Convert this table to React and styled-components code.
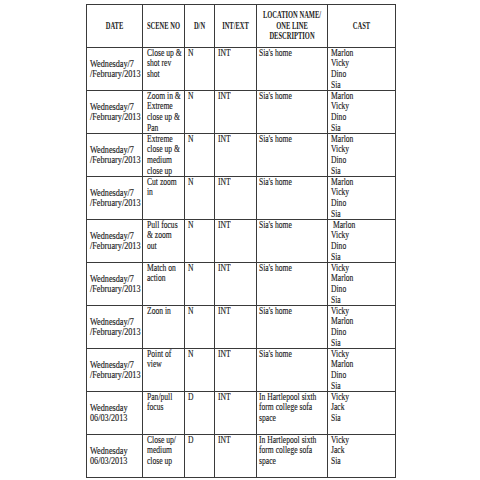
import React from 'react';
import styled, { createGlobalStyle } from 'styled-components';

const GlobalStyle = createGlobalStyle`
  html, body {
    margin: 0;
    padding: 0;
    background: #fff;
  }
`;

const Page = styled.div`
  width: 480px;
  height: 480px;
  padding: 4px 0 0 86px;
  box-sizing: border-box;
  font-family: 'Liberation Serif', 'Times New Roman', serif;
  color: #1c1c1c;
  overflow: hidden;
`;

const Table = styled.table`
  width: 309px;
  border-collapse: collapse;
  table-layout: fixed;
  border: 1.5px solid #3a3a3a;
`;

const HeadCell = styled.th`
  border: 1px solid #3a3a3a;
  height: 42px;
  padding: 0;
  vertical-align: middle;
  font-weight: bold;
  font-size: 10px;
  line-height: 10.6px;
`;

const Cell = styled.td`
  border: 1px solid #3a3a3a;
  height: 42px;
  padding: 0 0 0 ${(p) => p.$indent || 3}px;
  vertical-align: ${(p) => (p.$middle ? 'middle' : 'top')};
  font-size: 10px;
  line-height: 10.7px;
  -webkit-text-stroke: 0.15px #1c1c1c;
`;

// the source font is a narrow serif, so squeeze the lines sideways
const Lines = styled.div`
  display: flex;
  flex-direction: column;
  align-items: ${(p) => (p.$center ? 'center' : 'flex-start')};
  margin: ${(p) => (p.$center ? '0' : '-0.5px 0 -1px')};
  white-space: nowrap;
  transform: scaleX(${(p) => p.$squeeze || 0.76});
  transform-origin: ${(p) => (p.$center ? 'center top' : 'left top')};
`;

const columns = [56, 42, 30, 42, 71, 68];

const wed7 = ['Wednesday/7', '/February/2013'];
const wed6 = ['Wednesday', '06/03/2013'];
const mvds = ['Marlon', 'Vicky', 'Dino', 'Sia'];
const vmds = ['Vicky', 'Marlon', 'Dino', 'Sia'];
const vjs = ['Vicky', 'Jack', 'Sia'];
const home = ["Sia's home"];
const college = ['In Hartlepool sixth', 'form college sofa', 'space'];

const rows = [
  { date: wed7, scene: ['Close up &', 'shot rev', 'shot'], dn: 'N', loc: home, cast: mvds },
  { date: wed7, scene: ['Zoom in &', 'Extreme', 'close up &', 'Pan'], dn: 'N', loc: home, cast: mvds },
  { date: wed7, scene: ['Extreme', 'close up &', 'medium', 'close up'], dn: 'N', loc: home, cast: mvds },
  { date: wed7, scene: ['Cut zoom', 'in'], dn: 'N', loc: home, cast: mvds },
  { date: wed7, scene: ['Pull focus', '& zoom', 'out'], dn: 'N', loc: home, cast: ['\u00a0Marlon', 'Vicky', 'Dino', 'Sia'] },
  { date: wed7, scene: ['Match on', 'action'], dn: 'N', loc: home, cast: vmds },
  { date: wed7, scene: ['Zoon in'], dn: 'N', loc: home, cast: vmds },
  { date: wed7, scene: ['Point of', 'view'], dn: 'N', loc: home, cast: vmds },
  { date: wed6, scene: ['Pan/pull', 'focus'], dn: 'D', loc: college, cast: vjs },
  { date: wed6, scene: ['Close up/', 'medium', 'close up'], dn: 'D', loc: college, cast: vjs },
];

const TextLines = ({ lines, center, squeeze }) => (
  <Lines $center={center} $squeeze={squeeze}>
    {lines.map((l, i) => (
      <div key={i}>{l}</div>
    ))}
  </Lines>
);

const Header = ({ lines }) => (
  <HeadCell>
    <TextLines lines={lines} center squeeze={0.65} />
  </HeadCell>
);

export default function App() {
  return (
    <>
      <GlobalStyle />
      <Page>
        <Table>
          <colgroup>
            {columns.map((w, i) => (
              <col key={i} style={{ width: w }} />
            ))}
          </colgroup>
          <thead>
            <tr>
              <Header lines={['DATE']} />
              <Header lines={['SCENE NO']} />
              <Header lines={['D/N']} />
              <Header lines={['INT/EXT']} />
              <Header lines={['LOCATION NAME/', 'ONE LINE', 'DESCRIPTION']} />
              <Header lines={['CAST']} />
            </tr>
          </thead>
          <tbody>
            {rows.map((r, i) => (
              <tr key={i}>
                <Cell $middle>
                  <TextLines lines={r.date} squeeze={0.82} />
                </Cell>
                <Cell $indent={4}>
                  <TextLines lines={r.scene} />
                </Cell>
                <Cell>
                  <TextLines lines={[r.dn]} />
                </Cell>
                <Cell>
                  <TextLines lines={['INT']} />
                </Cell>
                <Cell $indent={2}>
                  <TextLines lines={r.loc} />
                </Cell>
                <Cell>
                  <TextLines lines={r.cast} />
                </Cell>
              </tr>
            ))}
          </tbody>
        </Table>
      </Page>
    </>
  );
}
